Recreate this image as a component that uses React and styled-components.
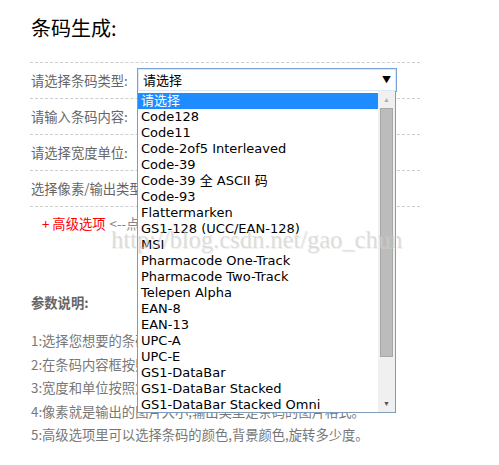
import React from 'react'
import styled, { createGlobalStyle } from 'styled-components'

const GlobalStyle = createGlobalStyle`
  body {
    margin: 0;
    background: #fff;
    font-family: "Liberation Sans", "Noto Sans CJK SC", sans-serif;
  }
`

const Page = styled.div`
  position: relative;
  width: 390px;
  padding: 16px 0 0 30px;
`
const Title = styled.h2`
  margin: 0 0 0 1px;
  font-size: 20px;
  line-height: 24px;
  font-weight: normal;
  color: #000;
  font-family: "Noto Sans CJK SC", sans-serif;
`
const Form = styled.div`
  margin-top: 22px;
  border-top: 1px dashed #ccc;
`
const Row = styled.div`
  display: flex;
  align-items: center;
  height: 35px;
  border-bottom: 1px dashed #ccc;
  padding-left: 1px;
`
const Label = styled.span`
  width: 106px;
  flex-shrink: 0;
  font-size: 13.3px;
  color: #666;
  font-family: "Noto Sans CJK SC", sans-serif;
  white-space: nowrap;
`
const SelectWrap = styled.div`
  position: relative;
  width: 260px;
  margin-top: -2px;
`
const SelectBox = styled.div`
  display: flex;
  align-items: center;
  justify-content: space-between;
  box-sizing: border-box;
  height: 24px;
  padding: 0 5px 0 5px;
  border: 1px solid #7aa0d4;
  box-shadow: inset 0 0 0 1px #dce8f7;
  font-size: 13px;
  color: #000;
  font-family: "Noto Sans CJK SC", sans-serif;
`
const Arrow = styled.span`
  font-size: 9px;
  color: #000;
`
const List = styled.div`
  position: absolute;
  top: 23px;
  left: 0;
  z-index: 2;
  display: flex;
  width: 259px;
  height: 322px;
  box-sizing: border-box;
  background: #fff;
  border: 1px solid #7f9db9;
  border-top: none;
`
const Items = styled.div`
  flex: 1;
  overflow: hidden;
  padding-top: 2px;
`
const Item = styled.div`
  height: 16px;
  line-height: 16px;
  padding-left: 3px;
  font-size: 13px;
  font-family: "DejaVu Sans", "Noto Sans CJK SC", sans-serif;
  white-space: nowrap;
  color: ${p => (p.$active ? '#fff' : '#000')};
  background: ${p => (p.$active ? '#1e8cff' : 'transparent')};
`
const Scrollbar = styled.div`
  width: 17px;
  background: #f0f0f0;
  display: flex;
  flex-direction: column;
  align-items: center;
`
const ScrollArrow = styled.div`
  height: 17px;
  display: flex;
  align-items: center;
  justify-content: center;
  font-size: 7px;
  color: ${p => p.$color};
`
const Thumb = styled.div`
  width: 13px;
  height: 249px;
  box-sizing: border-box;
  background: #bcbcbc;
  border: 1px solid #a8a8a8;
`
const Advanced = styled.div`
  height: 34px;
  line-height: 34px;
  padding-left: 12px;
  font-size: 13.3px;
  font-family: "Noto Sans CJK SC", sans-serif;
  color: #888;
`
const Red = styled.span`
  color: #f00;
  margin-right: 4px;
`
const NoteTitle = styled.div`
  margin-top: 50px;
  padding-left: 1px;
  line-height: 24px;
  font-size: 13.3px;
  font-weight: bold;
  color: #666;
  font-family: "Noto Sans CJK SC", sans-serif;
`
const Notes = styled.div`
  margin-top: 14px;
  padding-left: 1px;
`
const Note = styled.div`
  line-height: 23.5px;
  font-size: 13.3px;
  color: #777;
  font-family: "Noto Sans CJK SC", sans-serif;
  white-space: nowrap;
`
const Watermark = styled.div`
  position: absolute;
  top: 226px;
  left: 111px;
  z-index: 3;
  font-family: "Liberation Serif", serif;
  font-size: 24.5px;
  color: rgba(200, 200, 195, 0.55);
  text-shadow: 1px 1px 0 rgba(220, 220, 215, 0.4);
  pointer-events: none;
  white-space: nowrap;
`

const options = [
  '请选择', 'Code128', 'Code11', 'Code-2of5 Interleaved', 'Code-39',
  'Code-39 全 ASCII 码', 'Code-93', 'Flattermarken', 'GS1-128 (UCC/EAN-128)',
  'MSI', 'Pharmacode One-Track', 'Pharmacode Two-Track', 'Telepen Alpha',
  'EAN-8', 'EAN-13', 'UPC-A', 'UPC-E', 'GS1-DataBar', 'GS1-DataBar Stacked',
  'GS1-DataBar Stacked Omni',
]

const notes = [
  '1:选择您想要的条码类型,不同类型支持的内容不同。',
  '2:在条码内容框按照所选类型输入条码内容。',
  '3:宽度和单位按照您的需要填写。',
  '4:像素就是输出的图片大小,输出类型是条码的图片格式。',
  '5:高级选项里可以选择条码的颜色,背景颜色,旋转多少度。',
]

export default function App() {
  return (
    <Page>
      <GlobalStyle />
      <Title>条码生成:</Title>
      <Form>
        <Row>
          <Label>请选择条码类型:</Label>
          <SelectWrap>
            <SelectBox>
              请选择
              <Arrow>▼</Arrow>
            </SelectBox>
            <List>
              <Items>
                {options.map((o, i) => (
                  <Item key={o} $active={i === 0}>{o}</Item>
                ))}
              </Items>
              <Scrollbar>
                <ScrollArrow $color="#b0b0b0">▲</ScrollArrow>
                <Thumb />
                <div style={{ flex: 1 }} />
                <ScrollArrow $color="#555">▼</ScrollArrow>
              </Scrollbar>
            </List>
          </SelectWrap>
        </Row>
        <Row><Label>请输入条码内容:</Label></Row>
        <Row><Label>请选择宽度单位:</Label></Row>
        <Row><Label>选择像素/输出类型:</Label></Row>
      </Form>
      <Advanced>
        <Red>+ 高级选项</Red>&lt;--点击展开
      </Advanced>
      <NoteTitle>参数说明:</NoteTitle>
      <Notes>
        {notes.map(n => <Note key={n}>{n}</Note>)}
      </Notes>
      <Watermark>http://blog.csdn.net/gao_chun</Watermark>
    </Page>
  )
}
